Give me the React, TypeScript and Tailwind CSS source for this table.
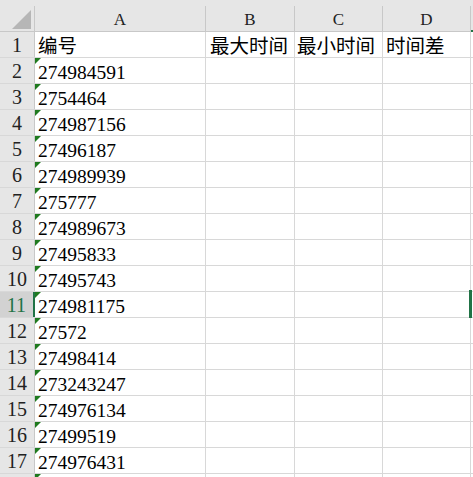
import React from "react";

const ids = [
  "274984591",
  "2754464",
  "274987156",
  "27496187",
  "274989939",
  "275777",
  "274989673",
  "27495833",
  "27495743",
  "274981175",
  "27572",
  "27498414",
  "273243247",
  "274976134",
  "27499519",
  "274976431",
  "",
];

const cellFont = { fontFamily: '"Liberation Serif", "Noto Sans CJK SC", serif' };

const Triangle = () => (
  <span className="absolute left-0 top-0 w-0 h-0 border-t-[6px] border-r-[6px] border-t-[#1f7a1f] border-r-transparent" />
);

const App: React.FC = () => {
  const cols = [
    { key: "A", w: "w-[171px]" },
    { key: "B", w: "w-[89px]" },
    { key: "C", w: "w-[88px]" },
    { key: "D", w: "w-[88px]" },
  ];

  return (
    <div className="w-[473px] h-[477px] overflow-hidden bg-white text-black" style={cellFont}>
      {/* column headers */}
      <div className="flex h-[32px] bg-[#e6e6e6] border-b border-[#c8c8c8]">
        <div className="relative w-[35px] shrink-0 border-r border-[#c8c8c8] mt-[6px]">
          <svg className="absolute right-[3px] bottom-[2px]" width="19" height="19" viewBox="0 0 19 19">
            <polygon points="19,0 19,19 0,19" fill="#b6b6b6" />
          </svg>
        </div>
        {cols.map((c) => (
          <div
            key={c.key}
            className={`${c.w} shrink-0 border-r border-[#c8c8c8] mt-[6px] flex items-end justify-center pb-[1px] text-[17px] leading-[20px] text-[#222]`}
          >
            {c.key}
          </div>
        ))}
        <div className="flex-1 mt-[6px] relative">
          <span className="absolute left-0 right-0 bottom-[-1px] h-[2px] bg-[#217346]" />
        </div>
      </div>

      {/* rows */}
      {Array.from({ length: 18 }).map((_, i) => {
        const row = i + 1;
        const selected = row === 11;
        const aText = row === 1 ? "编号" : ids[i - 1];
        return (
          <div key={row} className="flex h-[26px] border-b border-[#d8d8d8]">
            <div
              className={`w-[35px] shrink-0 flex items-center justify-center text-[20px] leading-[26px] ${
                selected
                  ? "bg-[#d2d2d2] text-[#217346] border-r-2 border-[#217346]"
                  : "bg-[#e6e6e6] text-[#222] border-r border-[#c8c8c8]"
              }`}
            >
              {row < 18 ? row : ""}
            </div>
            <div className="relative w-[171px] shrink-0 border-r border-[#d8d8d8] pl-[3px] text-[19.5px] leading-[29px] whitespace-nowrap">
              {row > 1 && <Triangle />}
              {aText}
            </div>
            <div className="w-[89px] shrink-0 border-r border-[#d8d8d8] pl-[4px] text-[19.5px] leading-[29px] whitespace-nowrap">
              {row === 1 ? "最大时间" : ""}
            </div>
            <div className="w-[88px] shrink-0 border-r border-[#d8d8d8] pl-[2px] text-[19.5px] leading-[29px] whitespace-nowrap">
              {row === 1 ? "最小时间" : ""}
            </div>
            <div className="w-[88px] shrink-0 border-r border-[#d8d8d8] pl-[3px] text-[19.5px] leading-[29px] whitespace-nowrap">
              {row === 1 ? "时间差" : ""}
            </div>
            <div className="relative flex-1">
              {selected && (
                <span className="absolute left-[-2px] top-[-2px] bottom-[-1px] w-[3px] bg-[#217346]" />
              )}
            </div>
          </div>
        );
      })}
    </div>
  );
};

export default App;
